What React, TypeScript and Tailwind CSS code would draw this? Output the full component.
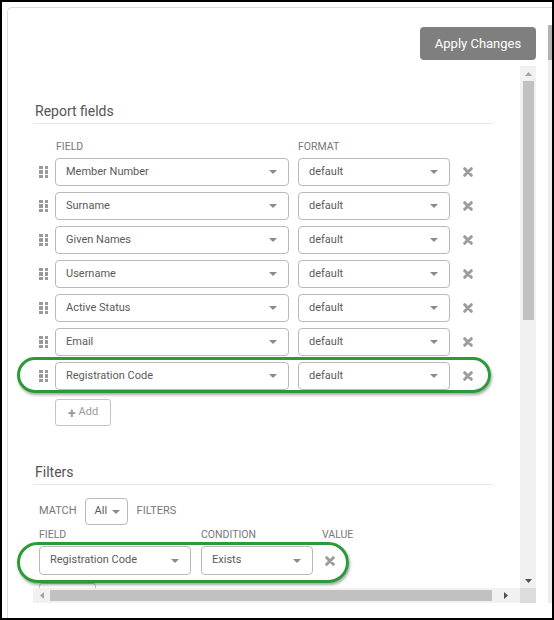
import React from 'react';

const font = { fontFamily: 'Roboto, "Liberation Sans", Arial, sans-serif' };

function Caret() {
  return (
    <svg width="8" height="4" viewBox="0 0 8 4" className="shrink-0">
      <path d="M0 0 L8 0 L4 4 Z" fill="#8a8a8a" />
    </svg>
  );
}

function RemoveIcon() {
  return (
    <svg width="10" height="10" viewBox="0 0 10 10" className="shrink-0">
      <path d="M1.7 1.7 L8.3 8.3 M8.3 1.7 L1.7 8.3" stroke="#9c9c9c" strokeWidth="3" strokeLinecap="round" />
    </svg>
  );
}

function DragHandle() {
  return (
    <div className="grid grid-cols-2 gap-x-[2px] gap-y-[1px] w-[9px]">
      {Array.from({ length: 6 }).map((_, i) => (
        <div key={i} className="w-[3.5px] h-[3.5px] bg-[#9a9a9a]"></div>
      ))}
    </div>
  );
}

function Select({ value, className }: { value: string; className: string }) {
  return (
    <div
      className={
        'flex items-center justify-between border border-[#bababa] rounded-[4px] bg-white text-[11px] text-[#5a5a5a] pl-[10px] pr-[11px] ' +
        className
      }
    >
      <span className="truncate">{value}</span>
      <Caret />
    </div>
  );
}

const fields = ['Member Number', 'Surname', 'Given Names', 'Username', 'Active Status', 'Email', 'Registration Code'];

export default function App() {
  return (
    <div className="relative w-[554px] h-[620px] bg-white overflow-hidden" style={font}>
      <div className="w-full h-full border-2 border-black flex flex-col">
        <div className="flex-1 ml-[5px] mt-[5px] border-l border-t border-[#dcdcdc] rounded-tl-[5px] flex">
          <div className="w-[528px] pl-[25px] flex flex-col">
            <div className="flex justify-end mt-[19px]">
              <button className="h-[33px] w-[116px] rounded-[4px] bg-[#7f7f7f] text-white text-[13px]">
                Apply Changes
              </button>
            </div>

            <div className="mt-[6px] h-[537px] flex flex-col">
              <div className="h-[522px] flex">
                <div className="w-[487px] overflow-hidden">
                  <div className="pt-[35px]">
                    {/* Report fields */}
                    <div className="w-[460px] pb-[2px] border-b border-[#e6e6e6] pl-[2px] text-[14px] leading-[20px] text-[#555]">
                      Report fields
                    </div>
                    <div className="flex mt-[16px] text-[10.5px] leading-[14px] text-[#777]">
                      <span className="ml-[23px] w-[242px]">FIELD</span>
                      <span>FORMAT</span>
                    </div>
                    <div className="mt-[4px] flex flex-col gap-[6px]">
                      {fields.map((f) => (
                        <div key={f} className="flex items-center h-[28px]">
                          <div className="w-[22px] pl-[6px]">
                            <DragHandle />
                          </div>
                          <Select value={f} className="w-[234px] h-[28px]" />
                          <Select value="default" className="w-[152px] h-[28px] ml-[9px]" />
                          <div className="ml-[13px]">
                            <RemoveIcon />
                          </div>
                        </div>
                      ))}
                    </div>
                    <button className="mt-[9px] ml-[22px] w-[56px] h-[27px] border border-[#c4c4c4] rounded-[3px] flex items-center justify-center gap-[3px] text-[11px] text-[#9a9a9a]">
                      <span className="text-[14px] leading-none font-bold">+</span>
                      <span>Add</span>
                    </button>

                    {/* Filters */}
                    <div className="mt-[36px] w-[460px] pb-[2px] border-b border-[#e6e6e6] pl-[2px] text-[14px] leading-[20px] text-[#555]">
                      Filters
                    </div>
                    <div className="mt-[13px] pl-[6px] flex items-center text-[11px] text-[#777]">
                      <span>MATCH</span>
                      <div className="ml-[8px] w-[43px] h-[27px] border border-[#bababa] rounded-[4px] flex items-center justify-between pl-[9px] pr-[7px] text-[11px] text-[#5a5a5a]">
                        <span>All</span>
                        <Caret />
                      </div>
                      <span className="ml-[9px]">FILTERS</span>
                    </div>
                    <div className="mt-[3px] pl-[6px] flex text-[10.5px] leading-[14px] text-[#777]">
                      <span className="w-[162px]">FIELD</span>
                      <span className="w-[121px]">CONDITION</span>
                      <span>VALUE</span>
                    </div>
                    <div className="mt-[4px] pl-[6px] flex items-center">
                      <Select value="Registration Code" className="w-[152px] h-[29px]" />
                      <Select value="Exists" className="w-[112px] h-[29px] ml-[10px]" />
                      <div className="ml-[12px]">
                        <RemoveIcon />
                      </div>
                    </div>
                    <div className="mt-[8px] ml-[6px] w-[57px] h-[27px] border border-[#c4c4c4] rounded-[3px]"></div>
                  </div>
                </div>
                {/* vertical scrollbar */}
                <div className="w-[16px] bg-[#f1f1f1] flex flex-col items-center">
                  <div className="h-[15px] flex items-center justify-center">
                    <svg width="7" height="4" viewBox="0 0 7 4">
                      <path d="M0 4 L7 4 L3.5 0 Z" fill="#a3a3a3" />
                    </svg>
                  </div>
                  <div className="w-[11px] h-[239px] bg-[#c1c1c1]"></div>
                  <div className="flex-1"></div>
                  <div className="h-[15px] flex items-center justify-center">
                    <svg width="7" height="4" viewBox="0 0 7 4">
                      <path d="M0 0 L7 0 L3.5 4 Z" fill="#505050" />
                    </svg>
                  </div>
                </div>
              </div>
              {/* horizontal scrollbar */}
              <div className="h-[15px] flex">
                <div className="w-[487px] bg-[#f1f1f1] flex items-center">
                  <div className="w-[17px] flex justify-center">
                    <svg width="4" height="7" viewBox="0 0 4 7">
                      <path d="M4 0 L4 7 L0 3.5 Z" fill="#a3a3a3" />
                    </svg>
                  </div>
                  <div className="w-[442px] h-[11px] bg-[#c1c1c1]"></div>
                  <div className="flex-1 flex justify-center">
                    <svg width="4" height="7" viewBox="0 0 4 7">
                      <path d="M0 0 L0 7 L4 3.5 Z" fill="#505050" />
                    </svg>
                  </div>
                </div>
                <div className="w-[16px] bg-[#dcdcdc]"></div>
              </div>
            </div>
          </div>
          <div className="w-[12px]"></div>
          <div className="w-[4px] mt-[17px] h-[578px] bg-[#ececec] flex flex-col">
            <div className="h-[35px] bg-[#b3b3b3]"></div>
          </div>
        </div>
      </div>

      {/* annotation highlights */}
      <div className="absolute left-[17px] top-[357px] w-[474px] h-[36px] border-[3px] border-[#2b9a37] rounded-full shadow-[1px_2px_3px_rgba(0,0,0,0.35)]"></div>
      <div className="absolute left-[17px] top-[542px] w-[332px] h-[41px] border-[3px] border-[#2b9a37] rounded-full shadow-[1px_2px_3px_rgba(0,0,0,0.35)]"></div>
    </div>
  );
}
